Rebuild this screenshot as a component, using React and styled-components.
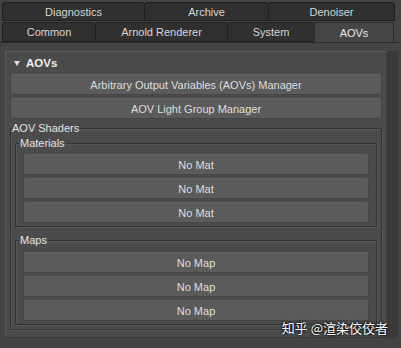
import React from 'react'
import styled, { createGlobalStyle } from 'styled-components'

const GlobalStyle = createGlobalStyle`
  html, body {
    margin: 0;
    padding: 0;
    background: #444444;
  }
  body {
    font-family: "Liberation Sans", Arial, sans-serif;
  }
`

const tabRows = [
  [
    { label: 'Diagnostics', width: 143 },
    { label: 'Archive', width: 125 },
    { label: 'Denoiser', width: 127 },
  ],
  [
    { label: 'Common', width: 94 },
    { label: 'Arnold Renderer', width: 133 },
    { label: 'System', width: 88 },
    { label: 'AOVs', width: 80, active: true },
  ],
]

const Page = styled.div`
  width: 401px;
  height: 348px;
  overflow: hidden;
  background: #444444;
  position: relative;
  display: flex;
  flex-direction: column;
`

const Tabs = styled.div`
  display: flex;
  flex-direction: column;
  padding: 2px 3px 0 2px;
  gap: 1px;
`

const TabRow = styled.div`
  display: flex;
  height: ${props => props.h}px;
`

const Tab = styled.div`
  width: ${props => props.w}px;
  box-sizing: border-box;
  display: flex;
  align-items: center;
  justify-content: center;
  font-size: 11px;
  color: ${props => (props.active ? '#e6e6e6' : '#d6d6d6')};
  background: ${props => (props.active ? '#464646' : '#303030')};
  border: 1px solid ${props => (props.active ? '#2c2c2c' : '#1f1f1f')};
  border-bottom: ${props => (props.active ? 'none' : '1px solid #1f1f1f')};
  border-radius: 3px 3px 0 0;
  margin-right: -1px;
`

const Body = styled.div`
  flex: 1;
  display: flex;
  padding: 8px 3px 10px 5px;
  border-top: 1px solid #2c2c2c;
`

const Rollout = styled.div`
  flex: 1;
  display: flex;
  flex-direction: column;
  background: #4b4b4b;
  border: 1px solid #5a5a5a;
  border-right-color: #3a3a3a;
  border-bottom-color: #3a3a3a;
  padding: 0 4px 4px 4px;
`

const ScrollTrack = styled.div`
  width: 9px;
  margin-left: 1px;
  background: #3a3a3a;
  border-left: 1px solid #333;
`

const RolloutHeader = styled.div`
  display: flex;
  align-items: center;
  height: 22px;
  gap: 6px;
  padding-left: 4px;
  font-size: 11.5px;
  font-weight: bold;
  color: #ececec;
`

const Arrow = styled.span`
  width: 0;
  height: 0;
  border-left: 3.5px solid transparent;
  border-right: 3.5px solid transparent;
  border-top: 5px solid #e0e0e0;
`

const Grip = styled.span`
  align-self: flex-start;
  margin: 5px 2px 0 auto;
  width: 7px;
  height: 5px;
  background-image: radial-gradient(#7a7a7a 45%, transparent 50%);
  background-size: 2px 2px;
`

const Button = styled.div`
  height: 21px;
  box-sizing: border-box;
  display: flex;
  align-items: center;
  justify-content: center;
  font-size: 11px;
  color: #dedede;
  background: #5b5b5b;
  border: 1px solid #464646;
  border-top-color: #626262;
  border-radius: 2px;
  margin-bottom: ${props => props.mb ?? 3}px;
`

const Group = styled.fieldset`
  margin: ${props => props.m || '0'};
  padding: ${props => props.p || '4px 4px 3px'};
  border: 1px solid #333333;
  box-shadow: inset 1px 1px 0 #575757, 1px 1px 0 #575757;
  border-radius: 1px;
  display: flex;
  flex-direction: column;
  min-width: 0;
`

const Legend = styled.legend`
  padding: 0 1px;
  margin-left: -4px;
  font-size: 11px;
  color: #e2e2e2;
  line-height: 12px;
`

const Watermark = styled.div`
  position: absolute;
  right: 13px;
  bottom: 13px;
  font-family: "Noto Sans CJK SC", "Noto Sans", sans-serif;
  font-size: 13px;
  line-height: 15px;
  color: #ffffff;
  text-shadow: 0 0 2px #000, 0 0 3px #000;
`

export default function App() {
  return (
    <Page>
      <GlobalStyle />
      <Tabs>
        {tabRows.map((row, i) => (
          <TabRow key={i} h={i === 0 ? 19 : 20}>
            {row.map(t => (
              <Tab key={t.label} w={t.width} active={t.active}>{t.label}</Tab>
            ))}
          </TabRow>
        ))}
      </Tabs>
      <Body>
        <Rollout>
          <RolloutHeader>
            <Arrow />
            AOVs
            <Grip />
          </RolloutHeader>
          <Button>Arbitrary Output Variables (AOVs) Manager</Button>
          <Button mb={3}>AOV Light Group Manager</Button>
          <Group p="0 4px 4px">
            <Legend>AOV Shaders</Legend>
            <Group m="3px 0 7px" p="5px 7px 3px">
              <Legend>Materials</Legend>
              <Button>No Mat</Button>
              <Button>No Mat</Button>
              <Button mb={0}>No Mat</Button>
            </Group>
            <Group p="6px 7px 3px">
              <Legend>Maps</Legend>
              <Button>No Map</Button>
              <Button>No Map</Button>
              <Button mb={0}>No Map</Button>
            </Group>
          </Group>
        </Rollout>
        <ScrollTrack />
      </Body>
      <Watermark>知乎 @渲染佼佼者</Watermark>
    </Page>
  )
}
